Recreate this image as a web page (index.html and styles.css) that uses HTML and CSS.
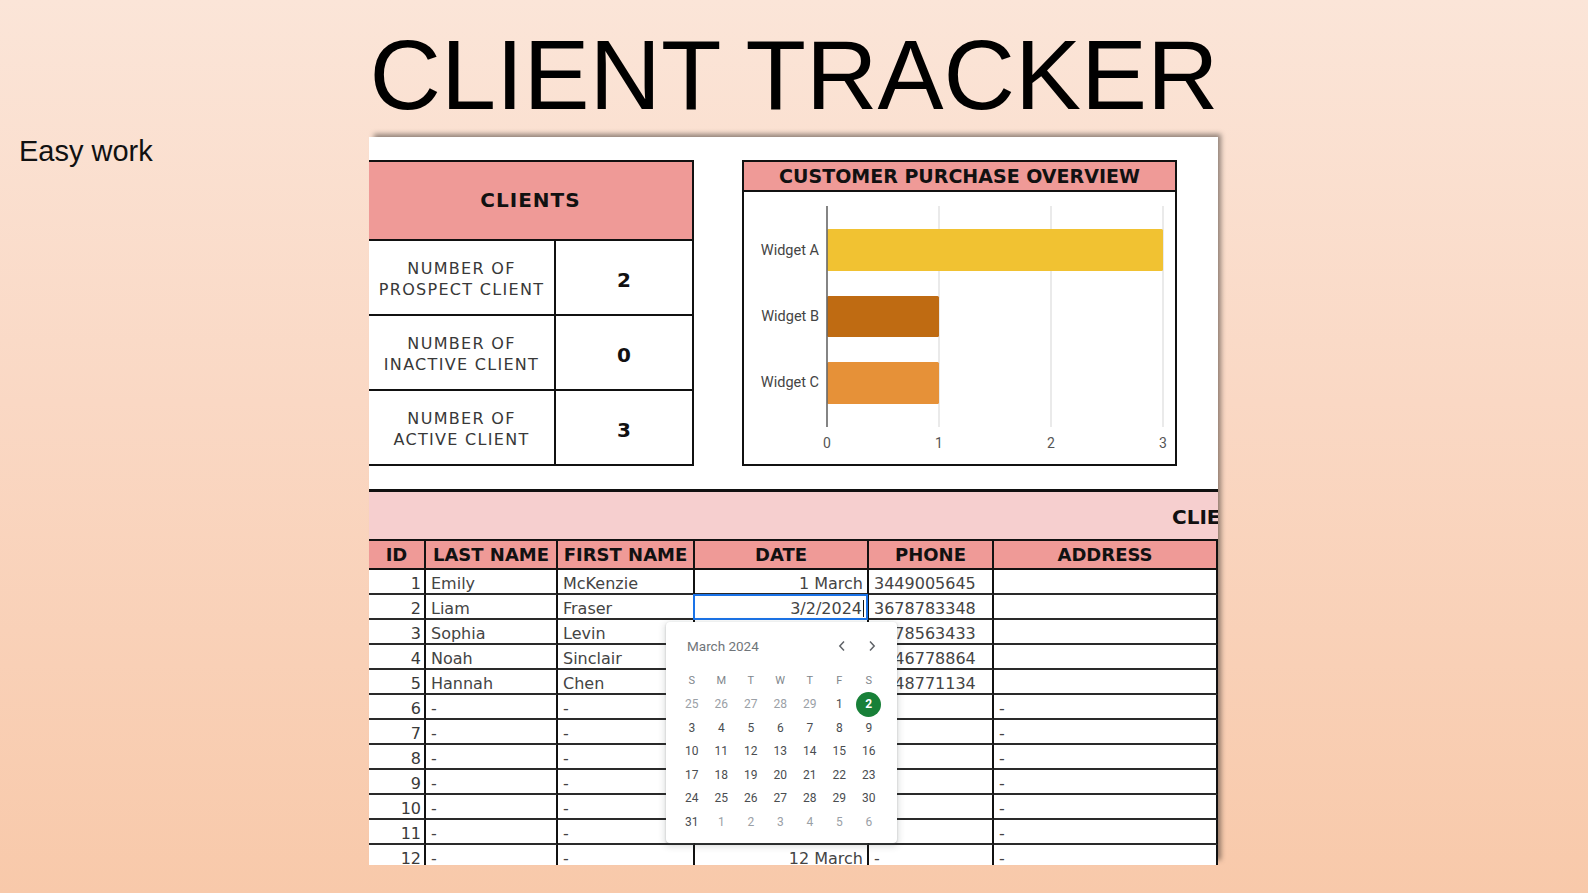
FILE: index.html
```html
<!DOCTYPE html>
<html lang="en">
<head>
<meta charset="utf-8">
<title>Client Tracker</title>
<link rel="stylesheet" href="styles.css">
</head>
<body>
<div class="page">
  <h1 class="title">CLIENT TRACKER</h1>
  <div class="side">Easy work</div>
  <div class="sheet">
    <div class="summary">
      <div class="clients">
        <div class="clients-head">CLIENTS</div>
        <div class="crow"><div class="clabel">NUMBER OF<br>PROSPECT CLIENT</div><div class="cval">2</div></div>
        <div class="crow"><div class="clabel">NUMBER OF<br>INACTIVE CLIENT</div><div class="cval">0</div></div>
        <div class="crow last"><div class="clabel">NUMBER OF<br>ACTIVE CLIENT</div><div class="cval">3</div></div>
      </div>
      <div class="chart">
        <div class="chart-title">CUSTOMER PURCHASE OVERVIEW</div>
        <svg class="chart-svg" width="431" height="272" viewBox="0 0 431 272">
          <line x1="195" y1="14" x2="195" y2="235" stroke="#dcdcdc" stroke-width="1.2"/>
          <line x1="307" y1="14" x2="307" y2="235" stroke="#dcdcdc" stroke-width="1.2"/>
          <line x1="419" y1="14" x2="419" y2="235" stroke="#dcdcdc" stroke-width="1.2"/>
          <rect x="83" y="37" width="336" height="42" rx="1.5" fill="#f1c232"/>
          <rect x="83" y="104" width="112" height="41" rx="1.5" fill="#bf6b12"/>
          <rect x="83" y="170" width="112" height="42" rx="1.5" fill="#e69138"/>
          <line x1="83" y1="14" x2="83" y2="235" stroke="#666" stroke-width="1.6"/>
          <g class="ylab">
            <text x="75" y="63" text-anchor="end">Widget A</text>
            <text x="75" y="129" text-anchor="end">Widget B</text>
            <text x="75" y="195" text-anchor="end">Widget C</text>
          </g>
          <g class="xlab">
            <text x="83" y="256" text-anchor="middle">0</text>
            <text x="195" y="256" text-anchor="middle">1</text>
            <text x="307" y="256" text-anchor="middle">2</text>
            <text x="419" y="256" text-anchor="middle">3</text>
          </g>
        </svg>
      </div>
    </div>
    <div class="list">
      <div class="band"><span>CLIENT LIST</span></div>
      <div class="table">
        <div class="h">ID</div><div class="h">LAST NAME</div><div class="h">FIRST NAME</div><div class="h">DATE</div><div class="h">PHONE</div><div class="h">ADDRESS</div>

        <div class="c id">1</div><div class="c">Emily</div><div class="c">McKenzie</div><div class="c r">1 March</div><div class="c">3449005645</div><div class="c"></div>
        <div class="c id">2</div><div class="c">Liam</div><div class="c">Fraser</div><div class="c r sel">3/2/2024<span class="caret"></span></div><div class="c">3678783348</div><div class="c"></div>
        <div class="c id">3</div><div class="c">Sophia</div><div class="c">Levin</div><div class="c r"></div><div class="c">3478563433</div><div class="c"></div>
        <div class="c id">4</div><div class="c">Noah</div><div class="c">Sinclair</div><div class="c r"></div><div class="c">3446778864</div><div class="c"></div>
        <div class="c id">5</div><div class="c">Hannah</div><div class="c">Chen</div><div class="c r"></div><div class="c">3448771134</div><div class="c"></div>
        <div class="c id">6</div><div class="c">-</div><div class="c">-</div><div class="c r"></div><div class="c"></div><div class="c">-</div>
        <div class="c id">7</div><div class="c">-</div><div class="c">-</div><div class="c r"></div><div class="c"></div><div class="c">-</div>
        <div class="c id">8</div><div class="c">-</div><div class="c">-</div><div class="c r"></div><div class="c"></div><div class="c">-</div>
        <div class="c id">9</div><div class="c">-</div><div class="c">-</div><div class="c r"></div><div class="c"></div><div class="c">-</div>
        <div class="c id">10</div><div class="c">-</div><div class="c">-</div><div class="c r"></div><div class="c"></div><div class="c">-</div>
        <div class="c id">11</div><div class="c">-</div><div class="c">-</div><div class="c r"></div><div class="c"></div><div class="c">-</div>
        <div class="c id">12</div><div class="c">-</div><div class="c">-</div><div class="c r">12 March</div><div class="c">-</div><div class="c">-</div>
      </div>
      <div class="picker">
        <div class="ph">
          <span class="month">March 2024</span>
          <span class="navs">
            <span class="nav"><svg width="8" height="12" viewBox="0 0 8 12"><path d="M6 1.5 L1.8 6 L6 10.5" fill="none" stroke="#5f6368" stroke-width="1.5"/></svg></span>
            <span class="nav"><svg width="8" height="12" viewBox="0 0 8 12"><path d="M2 1.5 L6.2 6 L2 10.5" fill="none" stroke="#5f6368" stroke-width="1.5"/></svg></span>
          </span>
        </div>
        <div class="days">
          <span class="wd">S</span><span class="wd">M</span><span class="wd">T</span><span class="wd">W</span><span class="wd">T</span><span class="wd">F</span><span class="wd">S</span>
          <span class="o">25</span><span class="o">26</span><span class="o">27</span><span class="o">28</span><span class="o">29</span><span>1</span><span><b class="pick">2</b></span>
          <span>3</span><span>4</span><span>5</span><span>6</span><span>7</span><span>8</span><span>9</span>
          <span>10</span><span>11</span><span>12</span><span>13</span><span>14</span><span>15</span><span>16</span>
          <span>17</span><span>18</span><span>19</span><span>20</span><span>21</span><span>22</span><span>23</span>
          <span>24</span><span>25</span><span>26</span><span>27</span><span>28</span><span>29</span><span>30</span>
          <span>31</span><span class="o">1</span><span class="o">2</span><span class="o">3</span><span class="o">4</span><span class="o">5</span><span class="o">6</span>
        </div>
      </div>
    </div>
  </div>
</div>
</body>
</html>
```
FILE: styles.css
```css
html, body {
  margin: 0;
  padding: 0;
}
body {
  min-height: 893px;
  background: linear-gradient(180deg, #fbe5d8 0%, #fad8c4 45%, #f8c9aa 100%);
  font-family: "DejaVu Sans", sans-serif;
  color: #111;
  overflow: hidden;
}
.page {
  display: grid;
  grid-template-columns: 369px 849px 1fr;
  grid-template-rows: auto auto;
  row-gap: 12px;
}
.title {
  grid-column: 1 / -1;
  grid-row: 1;
  margin: 0;
  padding-top: 25px;
  font-family: "Liberation Sans", Arial, sans-serif;
  font-weight: normal;
  font-size: 99px;
  line-height: 100px;
  text-align: center;
  color: #000;
  white-space: nowrap;
}
.side {
  grid-column: 1;
  grid-row: 2;
  padding-left: 19px;
  font-family: "Liberation Sans", Arial, sans-serif;
  font-size: 29px;
  line-height: 29px;
  color: #111;
}
.sheet {
  grid-column: 2;
  grid-row: 2;
  height: 728px;
  background: #fff;
  overflow: hidden;
  position: relative;
  box-shadow: 4px -4px 5px -1px rgba(0, 0, 0, 0.42);
}
.summary {
  display: flex;
  gap: 48px;
  margin-top: 23px;
}
.clients {
  width: 325px;
  box-sizing: border-box;
  border-top: 2px solid #111;
  border-right: 2px solid #111;
  border-bottom: 2px solid #111;
}
.clients-head {
  height: 77px;
  line-height: 77px;
  background: #ef9a97;
  border-bottom: 2px solid #111;
  text-align: center;
  font-weight: bold;
  font-size: 20px;
  letter-spacing: 1px;
  color: #111;
}
.crow {
  display: grid;
  grid-template-columns: 187px 1fr;
  height: 75px;
  box-sizing: border-box;
  border-bottom: 2px solid #111;
}
.crow.last {
  height: 73px;
  border-bottom: none;
}
.clabel {
  border-right: 2px solid #111;
  display: flex;
  align-items: center;
  justify-content: center;
  text-align: center;
  padding-top: 3px;
  box-sizing: border-box;
  font-size: 16px;
  line-height: 21px;
  letter-spacing: 1.3px;
  color: #383838;
}
.cval {
  display: flex;
  align-items: center;
  justify-content: center;
  padding-top: 5px;
  box-sizing: border-box;
  font-weight: bold;
  font-size: 20px;
  color: #111;
}
.chart {
  width: 435px;
  box-sizing: border-box;
  border: 2px solid #111;
  display: flex;
  flex-direction: column;
}
.chart-title {
  height: 28px;
  line-height: 28px;
  background: #ef9a97;
  border-bottom: 2px solid #111;
  text-align: center;
  font-weight: bold;
  font-size: 19px;
  color: #111;
  white-space: nowrap;
}
.chart-svg {
  display: block;
}
.ylab text {
  font-family: Roboto, sans-serif;
  font-size: 14.5px;
  fill: #444;
}
.xlab text {
  font-family: Roboto, sans-serif;
  font-size: 14px;
  fill: #555;
}
.list {
  margin-top: 23px;
  position: relative;
}
.band {
  border-top: 3px solid #111;
  border-bottom: 2px solid #111;
  height: 29px;
  padding-top: 11px;
  padding-bottom: 7px;
  line-height: 29px;
  background: #f6cfcf;
  padding-left: 803px;
  font-weight: bold;
  font-size: 20px;
  white-space: nowrap;
  color: #111;
}
.table {
  display: grid;
  grid-template-columns: 57px 132px 137px 174px 125px 224px;
}
.h {
  height: 29px;
  box-sizing: border-box;
  border-right: 2px solid #111;
  border-bottom: 2px solid #111;
  background: #ef9a97;
  text-align: center;
  font-weight: bold;
  font-size: 18px;
  line-height: 26px;
  padding-top: 1px;
  white-space: nowrap;
  color: #111;
}
.c {
  height: 25px;
  box-sizing: border-box;
  border-right: 2px solid #111;
  border-bottom: 2px solid #2a2a2a;
  padding: 5px 4px 0 5px;
  font-size: 16px;
  line-height: 18px;
  white-space: nowrap;
  overflow: hidden;
  color: #444;
}
.c.id {
  text-align: right;
  padding-right: 3px;
  color: #3a3a3a;
}
.c.r {
  text-align: right;
}
.c.sel {
  position: relative;
  overflow: visible;
  padding-right: 3px;
}
.c.sel::after {
  content: "";
  position: absolute;
  left: -2px;
  top: -1px;
  right: -1px;
  bottom: -2px;
  border: 2px solid #1a73e8;
}
.caret {
  display: inline-block;
  width: 1px;
  height: 17px;
  margin-left: 1px;
  background: #111;
  vertical-align: -3px;
}
.picker {
  position: absolute;
  left: 297px;
  top: 133px;
  width: 231px;
  height: 221px;
  box-sizing: border-box;
  background: #fff;
  border-radius: 4px;
  box-shadow: 0 1px 2px rgba(60, 64, 67, 0.3), 0 2px 6px 2px rgba(60, 64, 67, 0.15);
  font-family: Roboto, sans-serif;
  padding-top: 12px;
  z-index: 2;
}
.ph {
  display: flex;
  align-items: center;
  justify-content: space-between;
  height: 24px;
  margin: 0 10px 11px 21px;
}
.month {
  font-size: 13.5px;
  color: #70757a;
}
.navs {
  display: flex;
}
.nav {
  width: 30px;
  height: 24px;
  display: flex;
  align-items: center;
  justify-content: center;
}
.days {
  display: grid;
  grid-template-columns: repeat(7, 29.5px);
  grid-auto-rows: 23.5px;
  margin-left: 11px;
}
.days span {
  display: flex;
  align-items: center;
  justify-content: center;
  font-size: 12px;
  color: #4a4d50;
}
.days span.wd {
  font-size: 11px;
  color: #80868b;
}
.days span.o {
  color: #9aa0a6;
}
.pick {
  width: 25px;
  height: 25px;
  border-radius: 50%;
  background: #188038;
  color: #fff;
  font-weight: bold;
  font-size: 12px;
  display: flex;
  align-items: center;
  justify-content: center;
}
```
